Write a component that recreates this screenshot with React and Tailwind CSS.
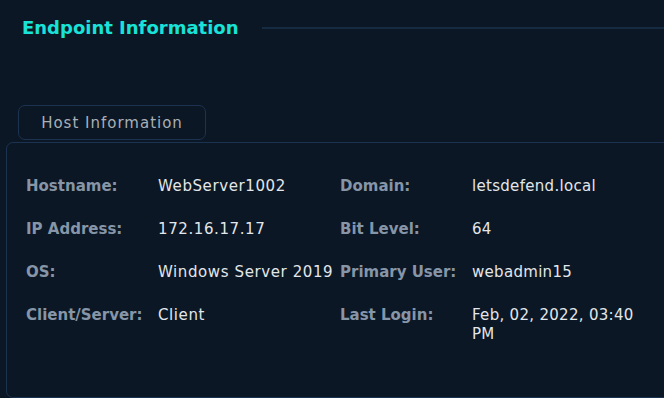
import React from 'react';

const left = [
  { label: 'Hostname:', value: 'WebServer1002' },
  { label: 'IP Address:', value: '172.16.17.17' },
  { label: 'OS:', value: 'Windows Server 2019' },
  { label: 'Client/Server:', value: 'Client' },
];

const right = [
  { label: 'Domain:', value: 'letsdefend.local' },
  { label: 'Bit Level:', value: '64' },
  { label: 'Primary User:', value: 'webadmin15' },
  { label: 'Last Login:', value: 'Feb, 02, 2022, 03:40 PM' },
];

const App = () => {
  return (
    <div className="w-[664px] h-[398px] overflow-hidden bg-[#0b1724] font-['DejaVu_Sans',sans-serif]">
      {/* Header */}
      <div className="flex items-center pl-[22px] pt-[14px] h-[28px] box-content">
        <h1 className="text-[#19e2d8] text-[18px] font-bold leading-none whitespace-nowrap">Endpoint Information</h1>
        <div className="flex-1 h-[2px] bg-[#142b42] ml-[23px]" />
      </div>

      {/* Tab */}
      <div className="pt-[63px] pl-[18px]">
        <div className="w-[188px] h-[35px] rounded-[7px] border border-[#1b3350] flex items-center justify-center pt-[2px] text-[15px] tracking-[1px] text-[#a9afb6]">
          Host Information
        </div>
      </div>

      {/* Panel */}
      <div className="mt-[2px] ml-[6px] w-[680px] h-[256px] rounded-[7px] border border-[#1b3350] pl-[19px] pt-[34px]">
        <div className="grid grid-cols-[132px_182px_132px_188px] gap-y-[24px] text-[15px] leading-[19px]">
          {left.map((row, i) => (
            <React.Fragment key={i}>
              <div className="font-bold text-[#8695a7] whitespace-nowrap">{row.label}</div>
              <div className="text-[#e3e6ea] whitespace-nowrap tracking-[0.6px]">{row.value}</div>
              <div className="font-bold text-[#8695a7] whitespace-nowrap">{right[i].label}</div>
              <div className="text-[#e3e6ea] tracking-[0.3px]">{right[i].value}</div>
            </React.Fragment>
          ))}
        </div>
      </div>
    </div>
  );
};

export default App;
